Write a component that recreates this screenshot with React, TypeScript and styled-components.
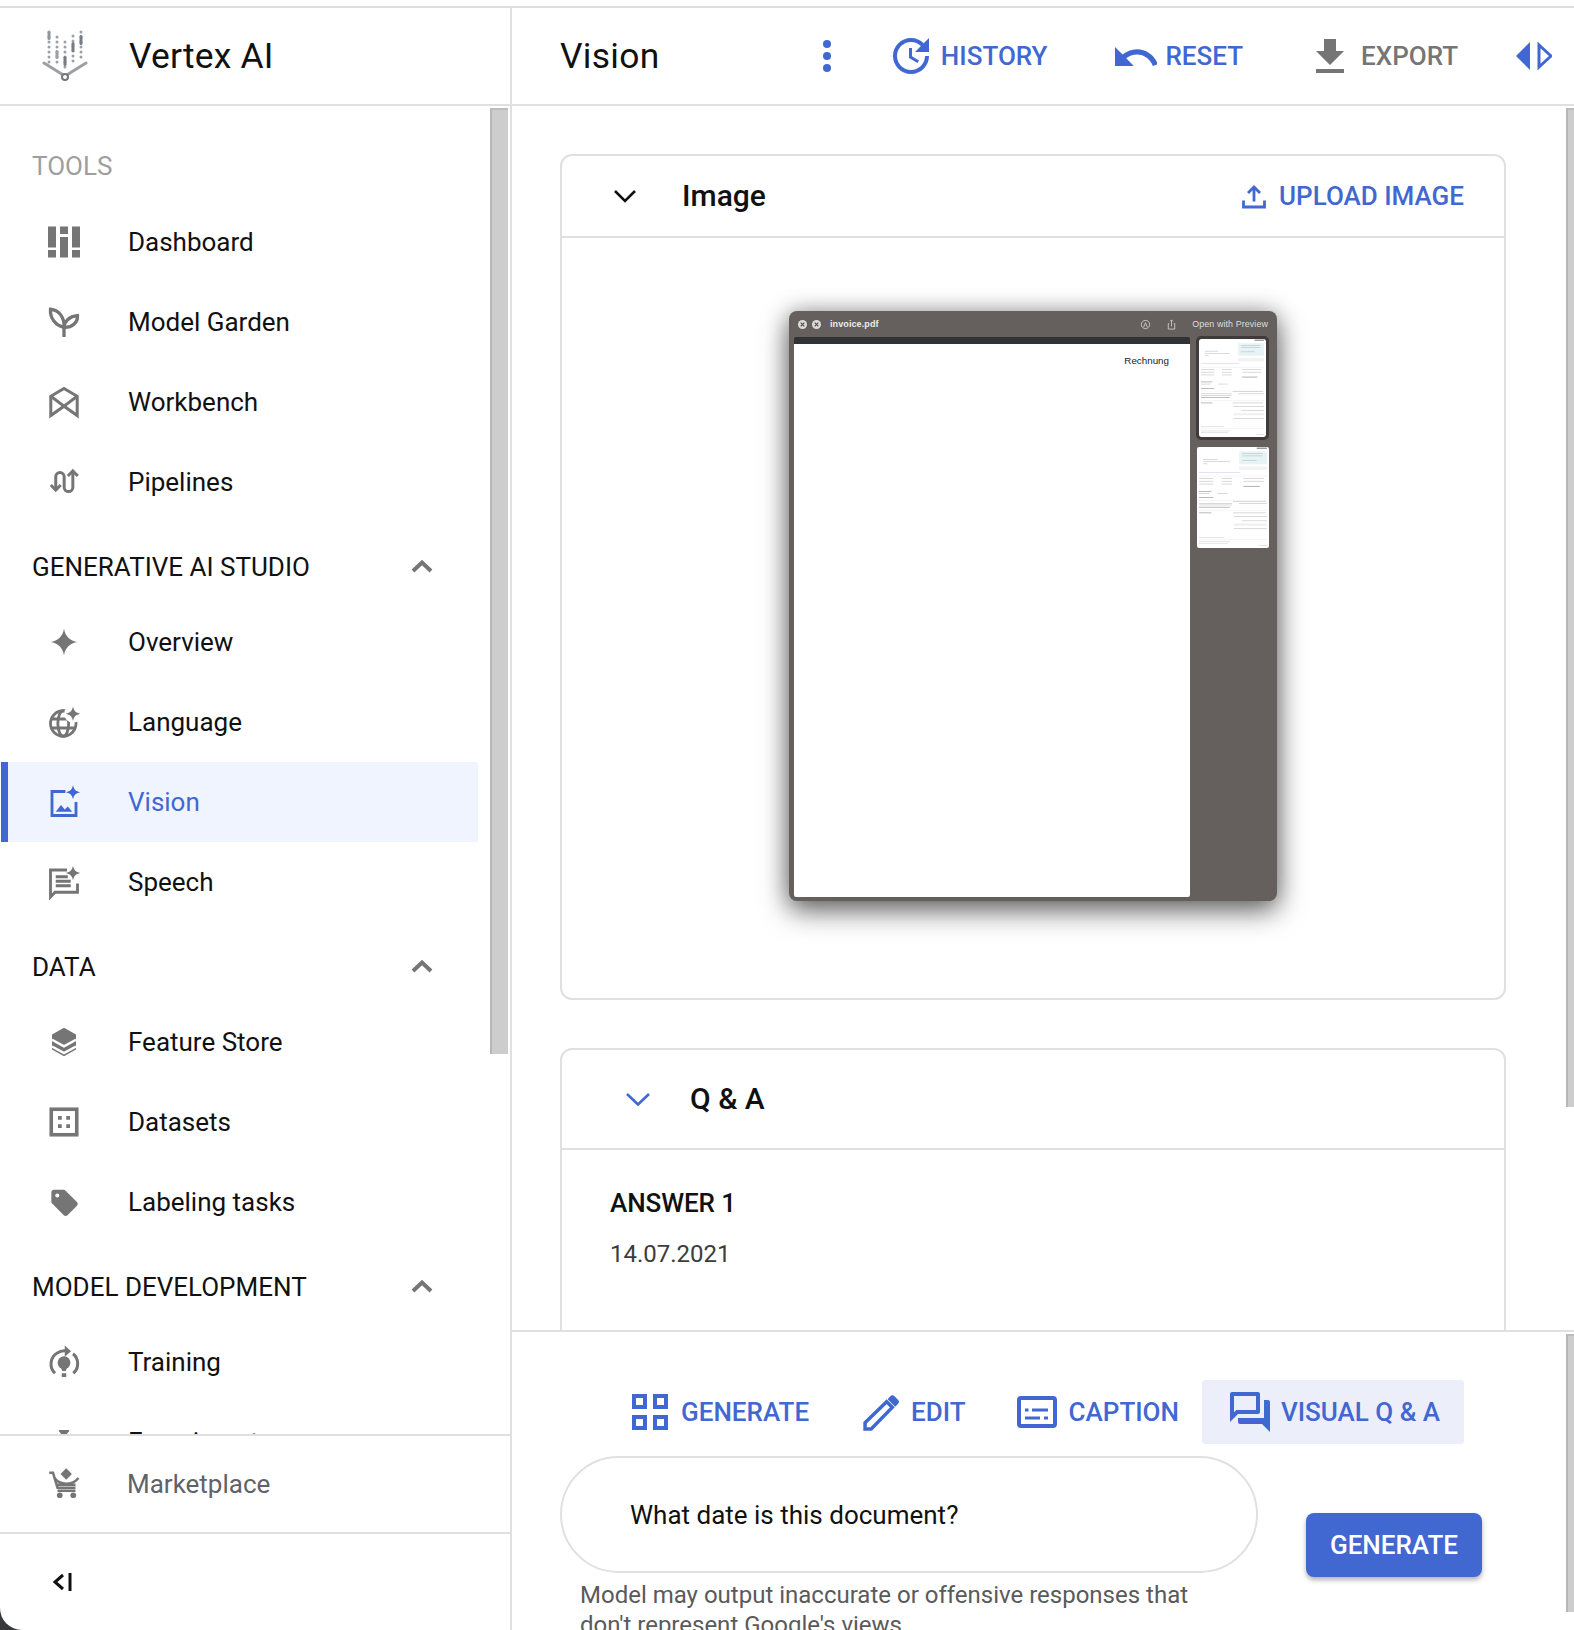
import React from "react";
import styled, { createGlobalStyle } from "styled-components";

const BLUE = "#4168d0";
const GREY = "#757575";
const LINE = "#e0e0e0";

const Global = createGlobalStyle`
  html, body { margin: 0; padding: 0; background: #38393b; overflow: hidden; }
  * { box-sizing: border-box; }
  body { font-family: Roboto, "Liberation Sans", sans-serif; color: #111; }
`;

const Page = styled.div`
  width: 1574px; height: 1630px; background: #fff; overflow: hidden;
  border-bottom-left-radius: 22px; display: flex; flex-direction: column;
`;
const TopEdge = styled.div`height: 8px; flex: none; border-bottom: 2px solid #dfdfe3;`;
const Body = styled.div`flex: 1; min-height: 0; display: flex;`;

const Sidebar = styled.aside`
  width: 512px; flex: none; border-right: 2px solid ${LINE};
  display: flex; flex-direction: column; min-height: 0;
`;
const BrandBar = styled.div`
  height: 98px; flex: none; border-bottom: 2px solid ${LINE};
  display: flex; align-items: center; padding-left: 42px; gap: 41px;
`;
const BrandName = styled.div`font-size: 35.4px; line-height: 40px; letter-spacing: 0.2px;`;
const NavScroll = styled.nav`flex: 1; min-height: 0; overflow: hidden; position: relative;`;
const ScrollThumb = styled.div<{ $h: number; $w: number }>`
  position: absolute; top: 2px; right: ${p => (p.$w === 18 ? 2 : 0)}px; width: ${p => p.$w}px; height: ${p => p.$h}px;
  background: #cdcdcd; border-left: 2px solid #b7b7b7; border-top: 2px solid #bdbdbd;
`;
const ToolsLabel = styled.div`
  height: 96px; padding: 40px 0 0 32px; font-size: 26px; line-height: 40px; color: #9e9e9e;
`;
const SectionHead = styled.div`
  height: 80px; padding: 9px 0 0 32px; display: flex; align-items: center; width: 478px;
  font-size: 26px;
`;
const SectionName = styled.span`flex: 1;`;
const SectionChevron = styled.svg`width: 22px; height: 14px; margin: 0 45px 2px 0; flex: none;`;
const NavRow = styled.div<{ $active?: boolean }>`
  height: 80px; display: flex; align-items: center; font-size: 26px; flex: none; gap: 46px;
  width: ${p => (p.$active ? 477 : 478)}px;
  margin-left: ${p => (p.$active ? 1 : 0)}px;
  padding-left: ${p => (p.$active ? 38 : 46)}px;
  color: ${p => (p.$active ? BLUE : "#111")};
  background: ${p => (p.$active ? "#f0f4fe" : "transparent")};
  border-left: ${p => (p.$active ? `7px solid ${BLUE}` : "none")};
`;
const NavIcon = styled.svg<{ $c?: string }>`
  width: 36px; height: 36px; flex: none; color: ${p => p.$c || GREY};
`;
const SideFoot = styled.div`
  height: 98px; flex: none; border-top: 2px solid ${LINE}; display: flex; align-items: center;
  padding-left: 47px; gap: 44px; font-size: 26px; color: #5f6368;
`;
const Collapse = styled.div`
  height: 98px; flex: none; border-top: 2px solid ${LINE}; display: flex; align-items: center; padding: 0 0 0 52px;
`;

const Main = styled.main`flex: 1; min-width: 0; display: flex; flex-direction: column;`;
const MainBar = styled.header`
  height: 98px; flex: none; border-bottom: 2px solid ${LINE};
  display: flex; align-items: center; padding: 0 22px 0 48px;
`;
const Title = styled.h1`margin: 0 auto 0 0; font-size: 35.4px; font-weight: 400; letter-spacing: 0.3px; line-height: 40px;`;
const BarAction = styled.div<{ $c?: string; $ml: number; $gap?: number }>`
  display: flex; align-items: center; margin-left: ${p => p.$ml}px; gap: ${p => p.$gap ?? 12}px;
  color: ${p => p.$c || BLUE}; font-size: 26px; font-weight: 500; line-height: 36px;
`;
const ContentScroll = styled.div`
  flex: 1; min-height: 0; overflow: hidden; position: relative; padding: 48px 68px 0 48px;
`;
const Card = styled.section`
  border: 2px solid ${LINE}; border-radius: 12px; & + & { margin-top: 48px; }
`;
const CardHead = styled.div<{ $h: number; $pl: number; $gap: number }>`
  height: ${p => p.$h}px; border-bottom: 2px solid ${LINE}; display: flex; align-items: center;
  padding: 0 40px 0 ${p => p.$pl}px; gap: ${p => p.$gap}px;
`;
const CardTitle = styled.div`
  font-size: 30px; font-weight: 500; flex: 1; padding-bottom: 2px;
`;
const Upload = styled.div`
  display: flex; align-items: center; gap: 13px; color: ${BLUE}; font-size: 26px; font-weight: 500;
`;
const ImageBody = styled.div`display: flex; justify-content: center; padding: 73px 0 97px;`;

const Shot = styled.div`
  width: 488px; height: 590px; background: #65605e; border-radius: 8px; display: flex; flex-direction: column;
  box-shadow: 0 10px 28px rgba(0,0,0,.55), 0 0 22px rgba(0,0,0,.25); overflow: hidden; flex: none;
`;
const ShotBar = styled.div`
  height: 26px; flex: none; display: flex; align-items: center; padding: 0 9px 0 9px;
  color: #ececec; font-family: "Liberation Sans", sans-serif; font-size: 9px;
`;
const ShotClose = styled.svg`width: 9px; height: 9px; margin-right: 5px; flex: none;`;
const ShotName = styled.span`margin-left: 4px; margin-right: auto; font-weight: 700; letter-spacing: 0.1px;`;
const ShotGlyph = styled.svg`width: 11px; height: 11px; margin-right: 15px; flex: none; color: #c9c9c9;`;
const ShotOpen = styled.span`font-size: 8.9px; color: #ddd; letter-spacing: .1px;`;
const ShotBody = styled.div`flex: 1; min-height: 0; display: flex; padding: 0 0 4px 5px;`;
const ShotPage = styled.div`
  width: 396px; background: #fff; border-top: 7px solid #2f3336; border-radius: 2px;
  display: flex; justify-content: flex-end; padding: 11px 21px 0 0; flex: none;
`;
const ShotWord = styled.div`
  height: 11px; overflow: hidden; font: 9.8px/12px "Liberation Sans", sans-serif; color: #222;
`;
const Thumbs = styled.div`
  flex: 1; display: flex; flex-direction: column; align-items: center; padding: 0 8px 0 6px;
`;
const Thumb = styled.svg<{ $sel?: boolean; $w: number; $h: number }>`
  width: ${p => p.$w}px; height: ${p => p.$h}px; background: #fff; flex: none; border-radius: 2px;
  ${p => (p.$sel ? "outline: 3px solid #3e3b3a; margin: 2px 0 10px;" : "")}
`;

const AnswerBody = styled.div`padding: 34px 48px 100px;`;
const AnswerHead = styled.div`font-size: 26px; font-weight: 500; line-height: 38px; letter-spacing: -0.1px;`;
const AnswerText = styled.div`margin-top: 13px; font-size: 24px; line-height: 38px; color: #3c3c3c;`;

const Composer = styled.div`
  height: 300px; flex: none; border-top: 2px solid ${LINE}; overflow: hidden; position: relative;
  padding: 48px 0 0 48px;
`;
const Tabs = styled.div`display: flex; height: 64px; margin-left: 48px; gap: 5px;`;
const Tab = styled.div<{ $active?: boolean; $pl: number; $pr: number; $gap: number }>`
  display: flex; align-items: center; gap: ${p => p.$gap}px; color: ${BLUE}; font-size: 26px; font-weight: 500;
  padding: 0 ${p => p.$pr}px 0 ${p => p.$pl}px; border-radius: 3px;
  background: ${p => (p.$active ? "#eceffa" : "transparent")};
`;
const ComposeRow = styled.div`display: flex; margin-top: 12px; align-items: flex-start;`;
const ComposeLeft = styled.div`width: 698px; flex: none;`;
const Prompt = styled.div`
  height: 117px; border: 2px solid ${LINE}; border-radius: 59px; display: flex; align-items: center;
  padding: 0 0 0 68px; font-size: 26px; color: #111;
`;
const Caution = styled.p`
  margin: 7px 0 0 20px; width: 640px; font-size: 24px; line-height: 30px; color: #5a5a5a;
`;
const Generate = styled.button`
  margin: 57px 0 0 48px; width: 176px; height: 64px; border: none; border-radius: 8px; padding: 0;
  background: ${BLUE}; color: #fff; font: 500 26px Roboto, sans-serif;
  box-shadow: 0 3px 5px rgba(0,0,0,.3);
`;

const Ico = ({ c, children, vb = "0 0 24 24" }: { c?: string; vb?: string; children: React.ReactNode }) => (
  <NavIcon $c={c} viewBox={vb} fill="currentColor">{children}</NavIcon>
);
const Sparkle = ({ x, y, r, c = "currentColor" }: { x: number; y: number; r: number; c?: string }) => (
  <path fill={c} stroke="#fff" strokeWidth=".8" paintOrder="stroke"
    d={`M${x} ${y - r}c${r * .12} ${r * .6} ${r * .4} ${r * .88} ${r} ${r}c${-r * .6} ${r * .12} ${-r * .88} ${r * .4} ${-r} ${r}c${-r * .12} ${-r * .6} ${-r * .4} ${-r * .88} ${-r} ${-r}c${r * .6} ${-r * .12} ${r * .88} ${-r * .4} ${r} ${-r}z`} />
);
const st = { fill: "none", stroke: "currentColor" } as const;

const icons: Record<string, React.ReactNode> = {
  dashboard: <>
    <rect x="2" y="2.5" width="8" height="21" /><rect x="2" y="26" width="8" height="7.5" />
    <rect x="14" y="2.5" width="8" height="7.5" /><rect x="14" y="13" width="8" height="20.5" />
    <rect x="26" y="2.5" width="8" height="21" /><rect x="26" y="26" width="8" height="7.5" />
  </>,
  garden: <g {...st} strokeWidth="2.2"><path d="M12 22v-7" /><path d="M12 15.500C12.500 9.500 9 4 3 3.500 2.500 9.500 6.500 14.500 12 15.500z" /><path d="M12 15.500c.3-4 3.500-7.200 9-7.700.2 4.500-3.500 8-9 7.700z" /></g>,
  workbench: <g {...st} strokeWidth="2"><path d="M3.200 8.200L12 3l8.800 5.200V21L12 14.800 3.200 21z" /><path d="M3.200 8.200L12 14.800l8.800-6.600" /></g>,
  pipelines: <g {...st} strokeWidth="2"><path d="M6.500 17V8.500a2.800 2.800 0 0 1 5.600 0v7a2.900 2.900 0 0 0 5.800 0V5" /><path d="M3.200 14l3.300 3.400L9.800 14" /><path d="M14.600 8l3.300-3.400L21.200 8" /></g>,
  overview: <path d="M12 3c.7 5 4 8.300 9 9-5 .7-8.300 4-9 9-.7-5-4-8.300-9-9 5-.7 8.300-4 9-9z" />,
  language: <>
    <g {...st} strokeWidth="1.900"><circle cx="11.500" cy="13" r="8.500" /><ellipse cx="11.500" cy="13" rx="3.600" ry="8.500" /><path d="M3.500 10h16M3.500 16h16" /></g>
    <circle cx="18" cy="6.500" r="6" fill="#fff" /><Sparkle x={18} y={6.500} r={4.800} />
  </>,
  vision: <>
    <path {...st} strokeWidth="1.900" d="M13 5H4v16h16v-9" /><path d="M6.500 18.500l3.500-4.500 2.500 3 2-2 3 3.500z" /><Sparkle x={18} y={5.500} r={4.800} />
  </>,
  speech: <>
    <path {...st} strokeWidth="1.900" d="M14 4H3v18l3-3.200h15V13" /><path {...st} strokeWidth="1.900" d="M6.500 8.500h8M6.500 11.500h10M6.500 14.500h10" /><Sparkle x={18} y={6} r={4.800} />
  </>,
  store: <>
    <path d="M12 2.500l8 4.500v10l-8 4.500-8-4.500V7z" />
    <g {...st} stroke="#fff" strokeWidth="1.700"><path d="M4 10.500l8 4.400 8-4.400" /><path d="M4 15l8 4.400 8-4.400" /></g>
  </>,
  datasets: <>
    <rect x="3.500" y="3.500" width="17" height="17" fill="none" stroke="currentColor" strokeWidth="2.400" />
    <rect x="8" y="8" width="2.500" height="2.500" /><rect x="13.500" y="8" width="2.500" height="2.500" />
    <rect x="8" y="13.500" width="2.500" height="2.500" /><rect x="13.500" y="13.500" width="2.500" height="2.500" />
  </>,
  labeling: <g transform="translate(1.800 2) scale(.88)"><path d="M21.410 11.410l-8.830-8.830C12.210 2.210 11.700 2 11.170 2H4c-1.100 0-2 .9-2 2v7.170c0 .53.21 1.040.59 1.410l8.830 8.830c.78.78 2.050.78 2.830 0l7.170-7.170c.78-.78.78-2.040-.01-2.830zM6.500 8C5.670 8 5 7.330 5 6.500S5.670 5 6.500 5 8 5.670 8 6.500 7.330 8 6.500 8z" /></g>,
  training: <>
    <g {...st} strokeWidth="2"><path d="M6 19.500A8.500 8.500 0 0 1 7.500 6 8.500 8.500 0 0 1 14 4.700" /><path d="M18 6.500a8.500 8.500 0 0 1 .2 13" /></g>
    <path d="M12.500 1v7.500l4.200-3.700z" /><circle cx="12" cy="12.500" r="4.300" /><path d="M9.800 15h4.400l-1 3h-2.400z" /><rect x="10.500" y="19.500" width="3" height="2.500" />
  </>,
  experiments: <path d="M19.800 18.400L14 10.670V6.500l1.350-1.690c.26-.33.03-.81-.39-.81H9.040c-.42 0-.65.48-.39.81L10 6.500v4.170L4.200 18.400c-.49.66-.02 1.600.8 1.600h14c.82 0 1.290-.94.8-1.600z" />,
  market: <>
    <path d="M12.800 1.500l3.800 3.800-3.800 3.800L9 5.300z" />
    <g {...st} strokeWidth="1.700"><path d="M1.500 4.500h2.500l3 10h12" /><path d="M5 8c2 2.800 4.500 3.800 7.800 3.800S19 10.500 21 8" /><path d="M6 12.500h13" /></g>
    <circle cx="8.500" cy="19.500" r="1.900" /><circle cx="17.500" cy="19.500" r="1.900" /><path {...st} strokeWidth="1.700" d="M7 16.500h12" />
  </>,
};

const nav = (k: string, label: string, active?: boolean) => (
  <NavRow $active={active} key={label}>
    {k === "dashboard"
      ? <Ico vb="0 0 36 36">{icons[k]}</Ico>
      : <Ico c={active ? BLUE : GREY}>{icons[k]}</Ico>}
    <span>{label}</span>
  </NavRow>
);
const Head = ({ label }: { label: string }) => (
  <SectionHead>
    <SectionName>{label}</SectionName>
    <SectionChevron viewBox="0 0 22 14" fill="none" stroke={GREY} strokeWidth="4"><path d="M2 12l9-8.500 9 8.500" /></SectionChevron>
  </SectionHead>
);

const ThumbDoc = () => (
  <g fill="#b4b4b4">
    <rect x="58" y="1" width="10" height="1.200" fill="#555" />
    <rect x="41" y="6" width="27" height="18" fill="#e6f4f6" />
    <rect x="44" y="9" width="20" height=".7" /><rect x="44" y="12" width="20" height=".7" /><rect x="44" y="18" width="14" height=".7" />
    <rect x="6" y="17" width="14" height=".7" /><rect x="6" y="20" width="26" height=".7" /><rect x="6" y="23" width="4" height=".7" />
    <rect x="41" y="27" width="27" height="5" fill="#f2f2f2" />
    <rect x="2" y="35" width="40" height=".7" fill="#c8c8ee" />
    <rect x="2" y="40" width="66" height=".5" fill="#e4e4e4" />
    <rect x="2" y="43" width="14" height=".7" /><rect x="24" y="43" width="10" height=".7" /><rect x="45" y="43" width="20" height=".7" />
    <rect x="2" y="47" width="14" height=".7" /><rect x="24" y="47" width="10" height=".7" /><rect x="45" y="47" width="20" height=".7" />
    <rect x="2" y="51" width="14" height=".7" /><rect x="24" y="51" width="10" height=".7" /><rect x="45" y="54" width="16" height=".7" fill="#666" />
    <rect x="2" y="61" width="12" height=".7" fill="#777" /><rect x="2" y="64" width="10" height=".7" /><rect x="20" y="64" width="10" height=".7" />
    <rect x="2" y="70" width="14" height=".7" fill="#777" />
    <rect x="2" y="74" width="66" height=".5" fill="#e4e4e4" /><rect x="35" y="75" width="32" height=".7" />
    <rect x="2" y="78" width="32" height=".7" /><rect x="2" y="80" width="32" height=".7" /><rect x="2" y="83" width="30" height=".7" fill="#777" />
    <rect x="41" y="78" width="27" height=".7" /><rect x="2" y="88" width="66" height=".5" fill="#e4e4e4" />
    <rect x="2" y="91" width="12" height=".7" fill="#777" /><rect x="35" y="91" width="32" height=".7" />
    <rect x="36" y="96" width="32" height=".7" /><rect x="44" y="102" width="24" height=".7" /><rect x="36" y="106" width="32" height="3" fill="#f0f0f0" />
    <rect x="36" y="113" width="32" height=".7" />
    <rect x="2" y="125" width="24" height=".7" fill="#ccc" /><rect x="2" y="128" width="66" height=".5" fill="#e4e4e4" /><rect x="2" y="131" width="30" height=".7" fill="#ccc" />
    <rect x="2" y="133" width="28" height=".7" fill="#ccc" /><rect x="60" y="136" width="8" height=".7" fill="#ccc" />
  </g>
);

const CloseDot = () => (
  <ShotClose viewBox="0 0 10 10"><circle cx="5" cy="5" r="5" fill="#dcdcdc" /><path d="M3 3l4 4M7 3L3 7" stroke="#55504e" strokeWidth="1.300" /></ShotClose>
);

export default function App() {
  return (
    <>
      <Global />
      <Page>
        <TopEdge />
        <Body>
          <Sidebar>
            <BrandBar>
              <svg width="46" height="52" viewBox="0 0 46 52" fill="#9aa0a6">
                <g fill="none" stroke="#9aa0a6" strokeWidth="3" strokeLinecap="round" strokeDasharray="0 5">
                  <path d="M7 2v32" /><path d="M15 7v30" /><path d="M23 12v28" /><path d="M31 6v30" /><path d="M39 2v30" />
                </g>
                <rect x="5.500" y="1" width="3" height="9" rx="1.500" fill="#8f959b" /><rect x="13.500" y="20" width="3" height="9" rx="1.500" /><rect x="21.500" y="26" width="3" height="10" rx="1.500" fill="#777c82" /><rect x="29.500" y="12" width="3" height="10" rx="1.500" fill="#777c82" /><rect x="37.500" y="5" width="3" height="10" rx="1.500" fill="#777c82" />
                <path d="M2 33l18.500 11.500M44 33L25.500 44.500" stroke="#9aa0a6" strokeWidth="3" strokeLinecap="round" fill="none" />
                <circle cx="23" cy="47" r="3" fill="#fff" stroke="#70757a" strokeWidth="2" />
              </svg>
              <BrandName>Vertex AI</BrandName>
            </BrandBar>
            <NavScroll>
              <ScrollThumb $h={946} $w={18} />
              <ToolsLabel>TOOLS</ToolsLabel>
              {nav("dashboard", "Dashboard")}
              {nav("garden", "Model Garden")}
              {nav("workbench", "Workbench")}
              {nav("pipelines", "Pipelines")}
              <Head label="GENERATIVE AI STUDIO" />
              {nav("overview", "Overview")}
              {nav("language", "Language")}
              {nav("vision", "Vision", true)}
              {nav("speech", "Speech")}
              <Head label="DATA" />
              {nav("store", "Feature Store")}
              {nav("datasets", "Datasets")}
              {nav("labeling", "Labeling tasks")}
              <Head label="MODEL DEVELOPMENT" />
              {nav("training", "Training")}
              {nav("experiments", "Experiments")}
            </NavScroll>
            <SideFoot>
              <Ico>{icons.market}</Ico>
              <span>Marketplace</span>
            </SideFoot>
            <Collapse>
              <svg width="20" height="20" viewBox="0 0 20 20" fill="none" stroke="#111" strokeWidth="3"><path d="M11 3l-8 7 8 7" /><path d="M18 1v18" /></svg>
            </Collapse>
          </Sidebar>
          <Main>
            <MainBar>
              <Title>Vision</Title>
              <BarAction $ml={0}>
                <svg width="8" height="32" viewBox="0 0 8 32" fill={BLUE}><circle cx="4" cy="4" r="4" /><circle cx="4" cy="16" r="4" /><circle cx="4" cy="28" r="4" /></svg>
              </BarAction>
              <BarAction $ml={62}>
                <svg width="36" height="36" viewBox="3 3 18 18" fill={BLUE}><path d="M11 8v5l4.250 2.520.77-1.280-3.520-2.090V8H11zm10 2V3l-2.640 2.640C16.740 4.010 14.490 3 12 3c-4.970 0-9 4.030-9 9s4.030 9 9 9 9-4.030 9-9h-2c0 3.860-3.140 7-7 7s-7-3.140-7-7 3.140-7 7-7c1.930 0 3.680.79 4.950 2.050L14 10h7z" /></svg>
                HISTORY
              </BarAction>
              <BarAction $ml={68} $gap={8}>
                <svg width="42" height="19" viewBox="2 7 20.100 9" fill={BLUE}><path d="M12.500 8c-2.650 0-5.050.99-6.900 2.600L2 7v9h9l-3.620-3.620c1.390-1.160 3.160-1.880 5.120-1.880 3.540 0 6.550 2.310 7.600 5.500l2.370-.78C21.080 11.030 17.150 8 12.500 8z" /></svg>
                RESET
              </BarAction>
              <BarAction $ml={73} $c={GREY} $gap={17}>
                <svg width="28" height="34" viewBox="5 3 14 17" fill={GREY}><path d="M19 9h-4V3H9v6H5l7 7 7-7zM5 18v2h14v-2H5z" /></svg>
                EXPORT
              </BarAction>
              <BarAction $ml={58}>
                <svg width="36" height="28" viewBox="0 0 36 28" fill={BLUE}><path d="M14 0v28L0 14z" /><path d="M23 3v22l12-11z" fill="none" stroke={BLUE} strokeWidth="3" /></svg>
              </BarAction>
            </MainBar>
            <ContentScroll>
              <ScrollThumb $h={999} $w={8} />
              <Card>
                <CardHead $h={82} $pl={52} $gap={46}>
                  <svg width="22" height="14" viewBox="0 0 22 14" fill="none" stroke="#111" strokeWidth="2.600"><path d="M1 2l10 10 10-10" /></svg>
                  <CardTitle>Image</CardTitle>
                  <Upload>
                    <svg width="24" height="25" viewBox="0 0 24 24" fill="none" stroke={BLUE} strokeWidth="2.800"><path d="M12 17V2.500" /><path d="M6 8.500l6-6 6 6" /><path d="M1.500 16v6.500h21V16" /></svg>
                    UPLOAD IMAGE
                  </Upload>
                </CardHead>
                <ImageBody>
                  <Shot>
                    <ShotBar>
                      <CloseDot /><CloseDot />
                      <ShotName>invoice.pdf</ShotName>
                      <ShotGlyph viewBox="0 0 12 12" fill="none" stroke="currentColor"><circle cx="6" cy="6" r="4.500" /><path d="M4 9l2-5 2 5" /></ShotGlyph>
                      <ShotGlyph viewBox="0 0 12 12" fill="none" stroke="currentColor"><path d="M3.500 5H2.500v6h7V5h-1M6 8V1M4.500 2.500L6 1l1.500 1.500" /></ShotGlyph>
                      <ShotOpen>Open with Preview</ShotOpen>
                    </ShotBar>
                    <ShotBody>
                      <ShotPage><ShotWord>Rechnung</ShotWord></ShotPage>
                      <Thumbs>
                        <Thumb $sel $w={67} $h={98} viewBox="0 0 70 140" preserveAspectRatio="none"><ThumbDoc /></Thumb>
                        <Thumb $w={72} $h={101} viewBox="0 0 70 140" preserveAspectRatio="none"><ThumbDoc /></Thumb>
                      </Thumbs>
                    </ShotBody>
                  </Shot>
                </ImageBody>
              </Card>
              <Card>
                <CardHead $h={100} $pl={64} $gap={40}>
                  <svg width="24" height="13" viewBox="0 0 24 13" fill="none" stroke={BLUE} strokeWidth="2.600"><path d="M1 1l11 10.500L23 1" /></svg>
                  <CardTitle>Q &amp; A</CardTitle>
                </CardHead>
                <AnswerBody>
                  <AnswerHead>ANSWER 1</AnswerHead>
                  <AnswerText>14.07.2021</AnswerText>
                </AnswerBody>
              </Card>
            </ContentScroll>
            <Composer>
              <ScrollThumb $h={278} $w={8} />
              <Tabs>
                <Tab $pl={24} $pr={24} $gap={13}>
                  <svg width="36" height="36" viewBox="0 0 36 36" fill="none" stroke={BLUE} strokeWidth="4"><rect x="2" y="2" width="11" height="11" /><rect x="23" y="2" width="11" height="11" /><rect x="2" y="23" width="11" height="11" /><rect x="23" y="23" width="11" height="11" /></svg>
                  GENERATE
                </Tab>
                <Tab $pl={25} $pr={24} $gap={11}>
                  <svg width="37" height="37" viewBox="0 0 36 36" fill={BLUE}><path d="M2 34v-6L23 7.500l5.500 5.500L8 34z" fill="none" stroke={BLUE} strokeWidth="3.400" /><path d="M24 5l2.500-2.800a3 3 0 0 1 4.200 0l3.300 3.300a3 3 0 0 1 0 4.200L31.300 12.500z" /></svg>
                  EDIT
                </Tab>
                <Tab $pl={22} $pr={18} $gap={12}>
                  <svg width="40" height="32" viewBox="0 0 40 32" fill="none"><rect x="2" y="2" width="36" height="28" rx="2" stroke={BLUE} strokeWidth="4" /><path d="M8 14h3.500M15 14h16M8 22h15M27 22h4" stroke={BLUE} strokeWidth="3.200" /></svg>
                  CAPTION
                </Tab>
                <Tab $active $pl={28} $pr={24} $gap={11}>
                  <svg width="40" height="40" viewBox="2 2 20 20" fill={BLUE}><path d="M15 4v7H5.170L4 12.170V4h11m1-2H3c-.55 0-1 .45-1 1v14l4-4h10c.55 0 1-.45 1-1V3c0-.55-.45-1-1-1zm5 4h-2v9H6v2c0 .55.45 1 1 1h11l4 4V7c0-.55-.45-1-1-1z" /></svg>
                  VISUAL Q &amp; A
                </Tab>
              </Tabs>
              <ComposeRow>
                <ComposeLeft>
                  <Prompt>What date is this document?</Prompt>
                  <Caution>Model may output inaccurate or offensive responses that don't represent Google's views</Caution>
                </ComposeLeft>
                <Generate>GENERATE</Generate>
              </ComposeRow>
            </Composer>
          </Main>
        </Body>
      </Page>
    </>
  );
}
